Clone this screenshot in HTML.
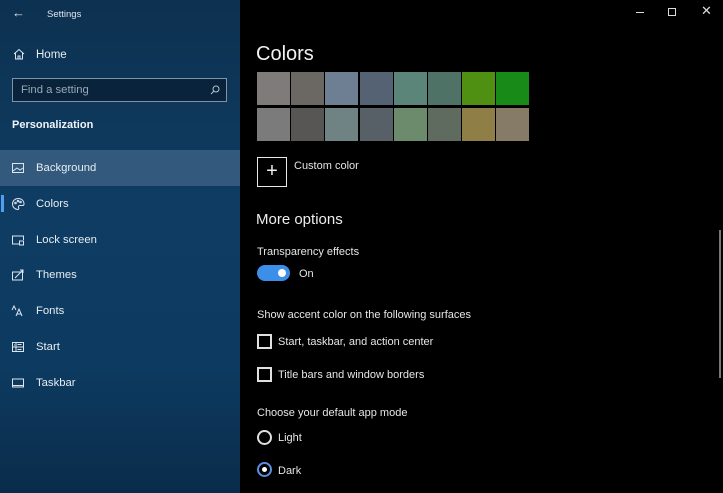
<!DOCTYPE html>
<html><head><meta charset="utf-8"><style>
*{margin:0;padding:0;box-sizing:border-box}
body{width:723px;height:493px;overflow:hidden;background:#000;font-family:"Liberation Sans",sans-serif;color:#fff;position:relative}
#side{position:absolute;left:0;top:0;width:240px;height:493px;background:linear-gradient(180deg,#0d3150 0%,#0e3c62 40%,#0d3a60 75%,#0a2c4a 100%)}
.a{position:absolute}
.t{font-size:11px;color:#e8eef3;margin-top:1px}
.nav{position:absolute;left:0;width:240px;height:36px}
.nav .ic{position:absolute;left:11px;top:11px;width:14px;height:14px}
.nav span{position:absolute;left:36px;top:12px;font-size:11.3px;color:#e6edf3}
.sw{position:absolute;width:33px;height:33px}
</style></head><body>
<div id="side">
<div class="a" style="left:12px;top:5px;font-size:13px;color:#dfe6ee">←</div>
<div class="a" style="left:47px;top:9px;font-size:9.5px;color:#dfe6ee">Settings</div>
<svg class="a" style="left:13px;top:48px" width="12" height="12" viewBox="0 0 12 12" fill="none" stroke="#dde5ee" stroke-width="1"><path d="M1 6L6 1.5L11 6M2.5 5v6h7V5M5 11V8h2v3"/></svg>
<div class="a" style="left:36px;top:49px;font-size:11.5px;color:#e6edf3">Home</div>
<div class="a" style="left:12px;top:78px;width:215px;height:24px;border:1px solid #7e93a6;background:rgba(5,20,35,.55)"></div>
<div class="a" style="left:21px;top:84px;font-size:11.3px;color:#9aa9b7">Find a setting</div>
<svg class="a" style="left:210px;top:85px" width="10" height="10" viewBox="0 0 10 10" fill="none" stroke="#b8c4d0" stroke-width="1"><circle cx="6" cy="4" r="3"/><path d="M4 6L1 9"/></svg>
<div class="a" style="left:12px;top:119px;font-size:11px;font-weight:bold;color:#f0f4f8">Personalization</div>
<div class="nav" style="top:150px;background:rgba(120,150,180,.35)"><svg class="ic" viewBox="0 0 14 14" fill="none" stroke="#dde5ee"><rect x="1.5" y="2.5" width="11" height="9"/><path d="M2 10l4-3 3 2 3-2"/></svg><span>Background</span></div>
<div class="a" style="left:1px;top:195px;width:3px;height:17px;background:#4ea0f0"></div>
<div class="nav" style="top:186px"><svg class="ic" viewBox="0 0 14 14" fill="none" stroke="#dde5ee"><path d="M7 1.5a5.5 5.5 0 1 0 0 11c1 0 1-1 .5-2s0-2 1.5-2h2.5c1 0 1.5-.5 1.5-1.5A5.5 5.5 0 0 0 7 1.5z"/><circle cx="4.5" cy="6" r=".8"/><circle cx="7" cy="4" r=".8"/><circle cx="9.5" cy="5" r=".8"/></svg><span>Colors</span></div>
<div class="nav" style="top:222px"><svg class="ic" viewBox="0 0 14 14" fill="none" stroke="#dde5ee"><path d="M8 11H1.5V3h11v4"/><rect x="8.5" y="8" width="4" height="4"/></svg><span>Lock screen</span></div>
<div class="nav" style="top:257px"><svg class="ic" viewBox="0 0 14 14" fill="none" stroke="#dde5ee"><rect x="1.5" y="4" width="10" height="8"/><path d="M4 10l8-8M9 2h3v3"/></svg><span>Themes</span></div>
<div class="nav" style="top:293px"><svg class="ic" viewBox="0 0 14 14" fill="none" stroke="#dde5ee"><path d="M1 6l2-4 2 4M5 12l3-7 3 7M6.3 10h3.4"/></svg><span>Fonts</span></div>
<div class="nav" style="top:329px"><svg class="ic" viewBox="0 0 14 14" fill="none" stroke="#dde5ee"><rect x="1.5" y="2.5" width="11" height="9"/><path d="M1.5 7h11M5 2.5v9M3 5h1M6.5 4.5h4M6.5 9.5h4"/></svg><span>Start</span></div>
<div class="nav" style="top:365px"><svg class="ic" viewBox="0 0 14 14" fill="none" stroke="#dde5ee"><rect x="1.5" y="3" width="11" height="8"/><path d="M1.5 9.5h11"/></svg><span>Taskbar</span></div>
</div>
<div class="a" style="left:636px;top:12px;width:8px;height:1px;background:#ddd"></div>
<div class="a" style="left:668px;top:8px;width:8px;height:8px;border:1px solid #ddd"></div>
<div class="a" style="left:701px;top:3px;font-size:13px;color:#ddd">✕</div>
<div class="a" style="left:256px;top:43px;font-size:20px;color:#f2f2f2">Colors</div>
<div class="sw" style="left:257px;top:72px;background:#7f7b7b"></div>
<div class="sw" style="left:291px;top:72px;background:#6b6763"></div>
<div class="sw" style="left:325px;top:72px;background:#6e7f94"></div>
<div class="sw" style="left:360px;top:72px;background:#556274"></div>
<div class="sw" style="left:394px;top:72px;background:#5b8579"></div>
<div class="sw" style="left:428px;top:72px;background:#4e7266"></div>
<div class="sw" style="left:462px;top:72px;background:#4f8f12"></div>
<div class="sw" style="left:496px;top:72px;background:#188a18"></div>
<div class="sw" style="left:257px;top:108px;background:#7c7b7b"></div>
<div class="sw" style="left:291px;top:108px;background:#575654"></div>
<div class="sw" style="left:325px;top:108px;background:#6f8384"></div>
<div class="sw" style="left:360px;top:108px;background:#566066"></div>
<div class="sw" style="left:394px;top:108px;background:#6c8a6c"></div>
<div class="sw" style="left:428px;top:108px;background:#5e6b5e"></div>
<div class="sw" style="left:462px;top:108px;background:#8f7f47"></div>
<div class="sw" style="left:496px;top:108px;background:#857b67"></div>
<div class="a" style="left:257px;top:157px;width:30px;height:30px;border:1px solid #e8e8e8;font-size:20px;line-height:26px;text-align:center;color:#eee">+</div>
<div class="a t" style="left:294px;top:159px;color:#e6e6e6">Custom color</div>
<div class="a" style="left:256px;top:211px;font-size:15px;color:#ededed">More options</div>
<div class="a t" style="left:257px;top:245px;color:#e6e6e6">Transparency effects</div>
<div class="a" style="left:257px;top:265px;width:33px;height:16px;border-radius:8px;background:#3c8fe8"></div>
<div class="a" style="left:278px;top:269px;width:8px;height:8px;border-radius:4px;background:#fff"></div>
<div class="a t" style="left:299px;top:267px;color:#e6e6e6">On</div>
<div class="a t" style="left:257px;top:308px;color:#e6e6e6">Show accent color on the following surfaces</div>
<div class="a" style="left:257px;top:334px;width:15px;height:15px;border:2px solid #e0e0e0"></div>
<div class="a t" style="left:278px;top:335px;color:#e6e6e6">Start, taskbar, and action center</div>
<div class="a" style="left:257px;top:367px;width:15px;height:15px;border:2px solid #e0e0e0"></div>
<div class="a t" style="left:278px;top:368px;color:#e6e6e6">Title bars and window borders</div>
<div class="a t" style="left:257px;top:406px;color:#e6e6e6">Choose your default app mode</div>
<div class="a" style="left:257px;top:430px;width:15px;height:15px;border:2px solid #e0e0e0;border-radius:50%"></div>
<div class="a t" style="left:278px;top:431px;color:#e6e6e6">Light</div>
<div class="a" style="left:257px;top:462px;width:15px;height:15px;border:2px solid #5a8ee0;border-radius:50%"></div>
<div class="a" style="left:262px;top:467px;width:5px;height:5px;border-radius:50%;background:#fff"></div>
<div class="a t" style="left:278px;top:464px;color:#e6e6e6">Dark</div>
<div class="a" style="left:719px;top:230px;width:2px;height:148px;background:#777"></div>
</body></html>
